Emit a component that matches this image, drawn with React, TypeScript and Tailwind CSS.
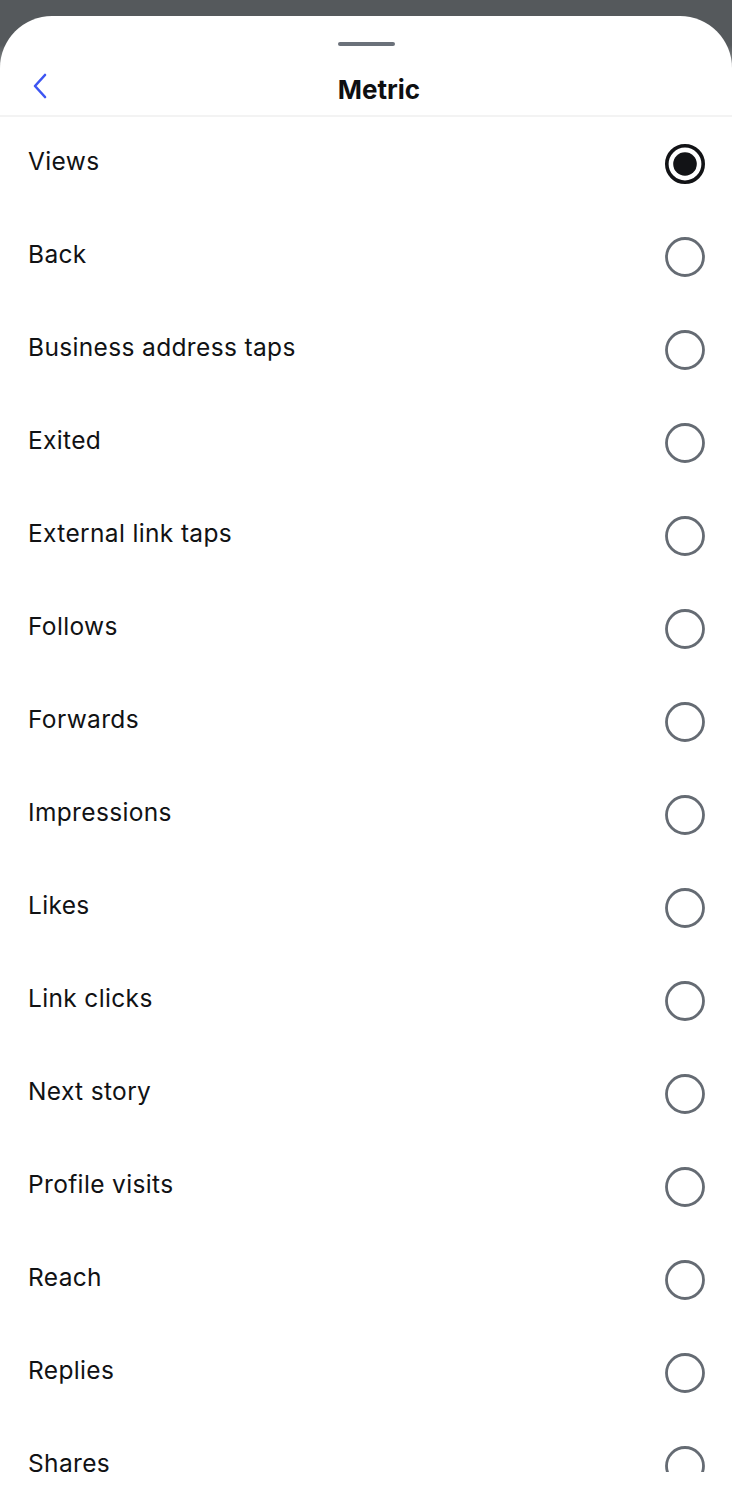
import React from "react";

const items = [
  "Views",
  "Back",
  "Business address taps",
  "Exited",
  "External link taps",
  "Follows",
  "Forwards",
  "Impressions",
  "Likes",
  "Link clicks",
  "Next story",
  "Profile visits",
  "Reach",
  "Replies",
  "Shares",
];

function Radio({ checked }: { checked: boolean }) {
  return (
    <svg width="42" height="42" viewBox="0 0 42 42" className="shrink-0">
      {checked ? (
        <>
          <circle cx="21" cy="21" r="18.2" fill="none" stroke="#121316" strokeWidth="3.6" />
          <circle cx="21" cy="21" r="11.8" fill="#121316" />
        </>
      ) : (
        <circle cx="21" cy="21" r="18.5" fill="none" stroke="#656b73" strokeWidth="2.8" />
      )}
    </svg>
  );
}

export default function App() {
  return (
    <div
      className="relative w-[732px] h-[1500px] overflow-hidden bg-[linear-gradient(to_bottom,#55595c_0px,#55595c_45px,#ffffff_110px)]"
      style={{ fontFamily: "Inter, 'Noto Sans', sans-serif" }}
    >
      <div className="mt-[16px] h-[1484px] bg-white rounded-t-[52px] flex flex-col">
        <div className="h-[101px] border-b-2 border-[#f3f3f3] flex flex-col shrink-0">
          <div className="flex justify-center pt-[26px]">
            <div className="w-[57px] h-[4px] rounded-full bg-[#6b717a]" />
          </div>
          <div className="relative flex items-center justify-center mt-[31px]">
            <svg
              width="16"
              height="26"
              viewBox="0 0 16 26"
              className="absolute left-[32px] top-[-4px]"
            >
              <path
                d="M13 2 L3 13 L13 24"
                fill="none"
                stroke="#3d55f2"
                strokeWidth="2.6"
                strokeLinecap="round"
                strokeLinejoin="round"
              />
            </svg>
            <span className="text-[26px] leading-[26px] font-bold text-[#0e0f11] tracking-[0px] ml-[26px]">
              Metric
            </span>
          </div>
        </div>
        <div className="h-[1355px] overflow-hidden shrink-0">
          {items.map((item, i) => (
            <div
              key={item}
              className="h-[93px] flex items-center justify-between pl-[28px] pr-[26px]"
            >
              <span className="text-[24.5px] leading-[28px] tracking-[0.35px] text-[#111214] pb-[5px]">
                {item}
              </span>
              <Radio checked={i === 0} />
            </div>
          ))}
        </div>
      </div>
    </div>
  );
}
